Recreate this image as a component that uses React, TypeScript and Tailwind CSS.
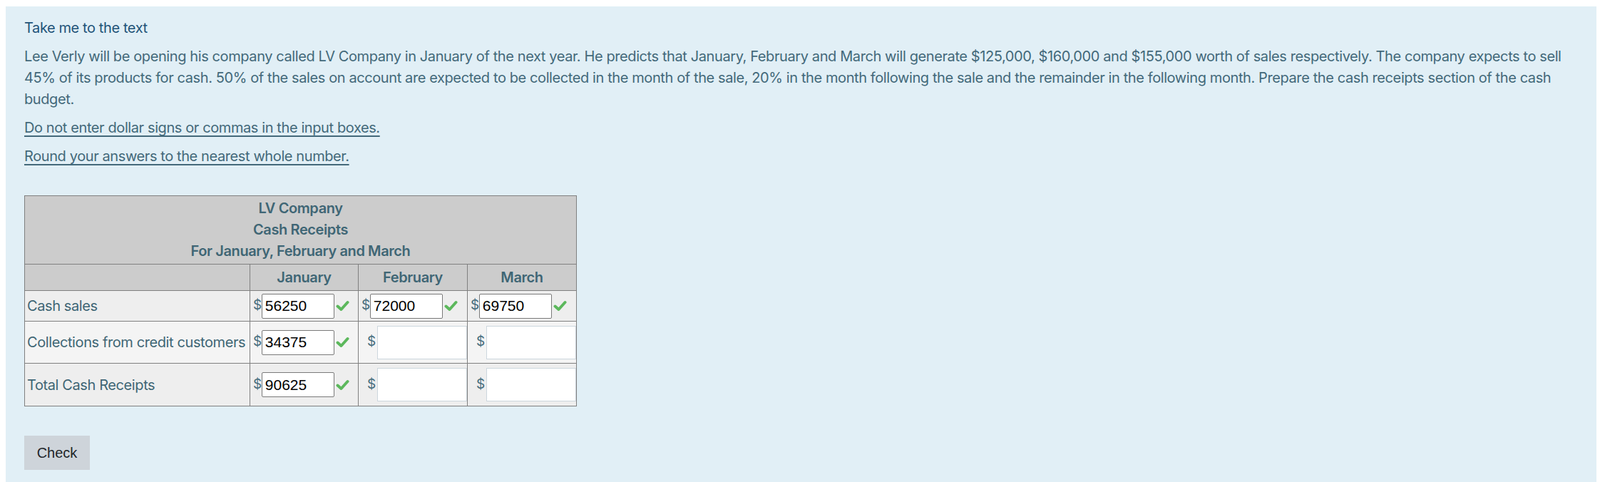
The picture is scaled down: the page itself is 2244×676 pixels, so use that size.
import React from 'react'

const sans = { fontFamily: 'Inter, "Noto Sans", sans-serif' }

function Check() {
  return (
    <svg width="19" height="16" viewBox="0 0 19 16" className="shrink-0">
      <path
        d="M2.5 8.5 L7.5 13 L16.5 3"
        fill="none"
        stroke="#5cb85c"
        strokeWidth="4"
        strokeLinecap="round"
        strokeLinejoin="round"
      />
    </svg>
  )
}

function Filled({ value }: { value: string }) {
  return (
    <div className="flex items-center pl-[4px]">
      <span className="text-[19px] leading-none text-[#456c7c] -mt-[3px]">$</span>
      <input
        readOnly
        value={value}
        className="w-[102px] h-[35px] border border-[#7a7a7a] rounded-[2px] bg-white pl-[4px] text-[21px] tracking-normal text-black outline-none"
        style={{ fontFamily: '"Liberation Sans", Arial, sans-serif' }}
      />
      <span className="ml-[2px]">
        <Check />
      </span>
    </div>
  )
}

function Empty() {
  return (
    <div className="flex items-center pl-[12px]">
      <span className="text-[19px] leading-none text-[#456c7c] -mt-[3px] mr-[2px]">$</span>
      <input
        readOnly
        className="w-[126px] h-[47px] border border-[#ccd6dd] bg-white outline-none"
      />
    </div>
  )
}

export default function App() {
  const rows = [
    { label: 'Cash sales', h: 'h-[43px]', bg: 'bg-[#eeeeee]', cells: ['56250', '72000', '69750'] },
    { label: 'Collections from credit customers', h: 'h-[59px]', bg: 'bg-[#f4f4f4]', cells: ['34375', null, null] },
    { label: 'Total Cash Receipts', h: 'h-[60px]', bg: 'bg-[#eeeeee]', cells: ['90625', null, null] },
  ]

  return (
    <div className="min-h-[676px] bg-white pt-[9px] pl-[8px] pr-[5px] tracking-[-0.4px]" style={sans}>
      <div className="bg-[#e1eff6] px-[26px] pt-[15px] pb-[16px] min-h-[667px]">
        <p className="text-[20px] leading-[30px] text-[#235479] mb-[10px]">Take me to the text</p>
        <p className="text-[20px] leading-[30px] text-[#43697a] mb-[10px]">
          Lee Verly will be opening his company called LV Company in January of the next year. He predicts that
          January, February and March will generate $125,000, $160,000 and $155,000 worth of sales respectively. The
          company expects to sell 45% of its products for cash. 50% of the sales on account are expected to be
          collected in the month of the sale, 20% in the month following the sale and the remainder in the following
          month. Prepare the cash receipts section of the cash budget.
        </p>
        <p className="text-[20px] leading-[30px] text-[#43697a] underline underline-offset-[4px] mb-[10px]">
          Do not enter dollar signs or commas in the input boxes.
        </p>
        <p className="text-[20px] leading-[30px] text-[#43697a] underline underline-offset-[4px]">
          Round your answers to the nearest whole number.
        </p>

        <table className="mt-[40px] border-collapse border border-[#808080] text-[20px] text-[#3f6675] table-fixed w-[774px]">
          <colgroup>
            <col className="w-[316px]" />
            <col className="w-[152px]" />
            <col className="w-[153px]" />
            <col className="w-[153px]" />
          </colgroup>
          <thead>
            <tr className="bg-[#cccccc]">
              <th colSpan={4} className="border border-[#808080] h-[96px] pt-[2px] font-semibold leading-[30px] text-center align-top">
                <div>LV Company</div>
                <div>Cash Receipts</div>
                <div>For January, February and March</div>
              </th>
            </tr>
            <tr className="bg-[#cccccc] h-[37px]">
              <th className="border border-[#808080]"></th>
              <th className="border border-[#808080] font-semibold">January</th>
              <th className="border border-[#808080] font-semibold">February</th>
              <th className="border border-[#808080] font-semibold">March</th>
            </tr>
          </thead>
          <tbody>
            {rows.map((r) => (
              <tr key={r.label} className={`${r.h} ${r.bg}`}>
                <td className="border border-[#808080] pl-[3px] pr-0 whitespace-nowrap font-normal">{r.label}</td>
                {r.cells.map((c, i) => (
                  <td key={i} className="border border-[#808080] p-0">
                    {c ? <Filled value={c} /> : <Empty />}
                  </td>
                ))}
              </tr>
            ))}
          </tbody>
        </table>

        <button
          className="mt-[41px] w-[92px] h-[48px] bg-[#ced4da] text-[20px] tracking-normal text-[#212529]"
          style={{ fontFamily: '"Liberation Sans", Arial, sans-serif' }}
        >
          Check
        </button>
      </div>
    </div>
  )
}
